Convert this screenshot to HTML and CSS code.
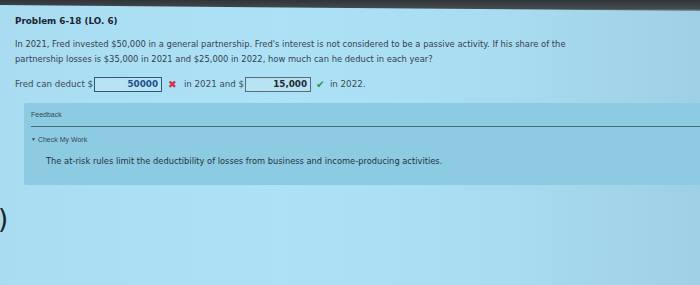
FILE: index.html
```html
<!DOCTYPE html>
<html>
<head>
<meta charset="utf-8">
<link rel="stylesheet" href="styles.css">
</head>
<body>
<div class="topbar"></div>
<main class="page">
  <h1 class="title">Problem 6-18 (LO. 6)</h1>
  <p class="question">In 2021, Fred invested $50,000 in a general partnership. Fred's interest is not considered to be a passive activity. If his share of the partnership losses is $35,000 in 2021 and $25,000 in 2022, how much can he deduct in each year?</p>
  <div class="answer">
    <span>Fred can deduct $</span>
    <span class="field wrong">50000</span>
    <span class="mark x">&#x2716;</span>
    <span>in 2021 and $</span>
    <span class="field">15,000</span>
    <span class="mark ok">&#x2714;</span>
    <span>in 2022.</span>
  </div>
  <section class="feedback">
    <div class="fb-head">Feedback</div>
    <div class="fb-toggle"><span class="tri">&#x25BC;</span> Check My Work</div>
    <p class="fb-text">The at-risk rules limit the deductibility of losses from business and income-producing activities.</p>
  </section>
  <div class="edge">)</div>
</main>
</body>
</html>
```
FILE: styles.css
```css
html, body {
  margin: 0;
  padding: 0;
  width: 700px;
  height: 285px;
  overflow: hidden;
}
body {
  background: linear-gradient(90deg, #a9dcf0 0%, #ade2f6 40%, #a8dbef 75%, #9fcfe4 100%);
  font-family: "DejaVu Sans", Verdana, sans-serif;
  color: #2a3540;
}
.topbar {
  height: 11px;
  background: linear-gradient(180deg, #2f3438 0%, #454a4f 80%, #7d959f 100%);
  clip-path: polygon(0 0, 100% 0, 100% 100%, 0 45%);
}
.page {
  padding: 0 0 0 15px;
  position: relative;
}
.title {
  margin: 3px 0 0;
  font-size: 8.8px;
  font-weight: bold;
  color: #1c2530;
  line-height: 14px;
}
.question {
  margin: 9px 0 0;
  font-size: 8.4px;
  line-height: 15px;
  width: 570px;
  color: #34404c;
}
.answer {
  margin-top: 9px;
  display: flex;
  align-items: center;
  font-size: 8.7px;
  color: #3c4a58;
  height: 16px;
}
.field {
  display: inline-block;
  box-sizing: border-box;
  height: 15px;
  line-height: 13px;
  border: 1px solid #5b6a76;
  background: #b7e3f3;
  text-align: right;
  font-weight: bold;
  font-size: 8.8px;
  color: #1f2a34;
  padding-right: 3px;
  width: 66px;
  margin-left: 1px;
}
.field.wrong {
  border: 1.5px solid #2f5877;
  color: #1c4f8c;
  width: 68px;
}
.mark {
  font-size: 10.5px;
  margin: 0 7px 0 6px;
}
.mark.x { color: #d2324a; }
.mark.ok { color: #2a9a3c; margin: 0 5px 0 5px; }
.feedback {
  margin: 11px 0 0 9px;
  background: #8ccbe2;
  border-radius: 2px 0 0 2px;
  height: 82px;
  padding: 0 0 0 7px;
  font-family: "Liberation Sans", Arial, sans-serif;
}
.fb-head {
  font-size: 7px;
  color: #3a4854;
  padding-top: 8px;
  height: 24px;
  line-height: 8px;
  box-sizing: border-box;
  border-bottom: 1px solid #4a6a7c;
  margin-bottom: 8px;
}
.fb-toggle {
  font-size: 7px;
  color: #3a4854;
  line-height: 8px;
}
.tri { font-size: 5px; vertical-align: 1px; }
.fb-text {
  margin: 12px 0 0 15px;
  font-family: "DejaVu Sans", Verdana, sans-serif;
  font-size: 8.3px;
  color: #27333e;
}
.edge {
  position: absolute;
  left: -2px;
  top: 190px;
  font-size: 26px;
  line-height: 30px;
  color: #1a1f26;
  font-family: "DejaVu Sans", sans-serif;
}
```
